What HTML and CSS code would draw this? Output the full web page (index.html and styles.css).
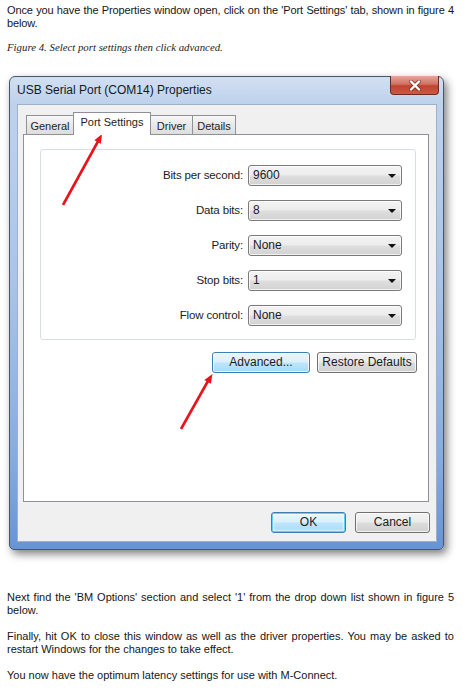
FILE: index.html
```html
<!DOCTYPE html>
<html>
<head>
<meta charset="utf-8">
<title>Port Settings</title>
<link rel="stylesheet" href="styles.css">
</head>
<body>
<div class="page">
  <p class="para intro">Once you have the Properties window open, click on the 'Port Settings' tab, shown in figure 4 below.</p>
  <p class="caption">Figure 4. Select port settings then click advanced.</p>

  <div class="window">
    <div class="titlebar">
      <span class="title">USB Serial Port (COM14) Properties</span>
      <div class="close">
        <svg width="14" height="11" viewBox="0 0 14 11"><path d="M3 1.5 L11 9.5 M11 1.5 L3 9.5" stroke="#5a1a14" stroke-width="4" stroke-linecap="round" opacity="0.55"/><path d="M3 1.5 L11 9.5 M11 1.5 L3 9.5" stroke="#ffffff" stroke-width="2.4" stroke-linecap="round"/></svg>
      </div>
    </div>
    <div class="client">
      <div class="tabs">
        <div class="tab t-general">General</div>
        <div class="tab active t-port">Port Settings</div>
        <div class="tab t-driver">Driver</div>
        <div class="tab t-details">Details</div>
      </div>
      <div class="panel">
        <div class="group">
          <div class="row"><span class="label">Bits per second:</span><div class="select"><span class="value">9600</span><span class="caret"></span></div></div>
          <div class="row"><span class="label">Data bits:</span><div class="select"><span class="value">8</span><span class="caret"></span></div></div>
          <div class="row"><span class="label">Parity:</span><div class="select"><span class="value">None</span><span class="caret"></span></div></div>
          <div class="row"><span class="label">Stop bits:</span><div class="select"><span class="value">1</span><span class="caret"></span></div></div>
          <div class="row"><span class="label">Flow control:</span><div class="select"><span class="value">None</span><span class="caret"></span></div></div>
        </div>
        <div class="btnrow">
          <div class="btn default b-adv">Advanced...</div>
          <div class="btn b-restore">Restore Defaults</div>
        </div>
      </div>
      <div class="footer">
        <div class="btn default glow b-ok">OK</div>
        <div class="btn b-cancel">Cancel</div>
      </div>
    </div>
  </div>

  <p class="para after">Next find the 'BM Options' section and select '1' from the drop down list shown in figure 5 below.</p>
  <p class="para">Finally, hit OK to close this window as well as the driver properties. You may be asked to restart Windows for the changes to take effect.</p>
  <p class="para">You now have the optimum latency settings for use with M-Connect.</p>

  <svg class="arrows" width="474" height="693" viewBox="0 0 474 693">
    <line x1="63" y1="205" x2="98.2" y2="141" stroke="#e8141c" stroke-width="2.6"/>
    <polygon points="102,134 100.9,143.8 94.4,140.2" fill="#e8141c"/>
    <line x1="181" y1="429" x2="208" y2="381" stroke="#e8141c" stroke-width="2.6"/>
    <polygon points="212.5,374 210.9,383.8 204.3,380.1" fill="#e8141c"/>
  </svg>
</div>
</body>
</html>
```
FILE: styles.css
```css
* { box-sizing: border-box; }
html, body { margin: 0; padding: 0; background: #ffffff; }

.page {
  position: relative;
  width: 474px;
  height: 693px;
  overflow: hidden;
  padding: 4px 20px 0 7px;
  font-family: "Liberation Sans", Arial, sans-serif;
  font-size: 11px;
  line-height: 13px;
  color: #161616;
}

.para {
  margin: 0 0 13px;
  text-align: justify;
}
.intro { margin-bottom: 11px; letter-spacing: -0.12px; }
.after { margin-top: 41px; }

.caption {
  margin: 0;
  font-family: "Liberation Serif", "Times New Roman", serif;
  font-style: italic;
  font-size: 10.8px;
  line-height: 13px;
  color: #222;
}

/* ---- window ---- */
.window {
  width: 435px;
  height: 474px;
  margin: 22px 0 0 2px;
  border: 1px solid #44576f;
  border-radius: 6px 6px 5px 5px;
  background: linear-gradient(180deg, #d2dff1 0px, #bed2ec 26px, #a9c3e7 45%, #88acdf 80%, #6794d5 100%);
  box-shadow: 3px 4px 9px rgba(0, 0, 0, 0.5);
  display: flex;
  flex-direction: column;
  padding: 0 6px 7px 7px;
  font-family: "Liberation Sans", Arial, sans-serif;
  color: #1b1b1b;
}

.titlebar {
  height: 27px;
  display: flex;
  align-items: center;
  flex-shrink: 0;
}
.title {
  font-size: 12px;
  color: #141a22;
  padding-bottom: 1px;
}
.close {
  margin-left: auto;
  margin-right: -2px;
  align-self: flex-start;
  margin-top: -1px;
  width: 49px;
  height: 19px;
  border: 1px solid #6b2b24;
  border-top: none;
  border-radius: 0 0 4px 4px;
  background: linear-gradient(180deg, #e3a79c 0%, #d27262 45%, #be4330 55%, #cc5a43 100%);
  display: flex;
  align-items: center;
  justify-content: center;
}
.close svg { display: block; }

.client {
  flex: 1;
  background: #f0f0f0;
  border: 1px solid #9fb0c8;
  padding: 7px 7px 0 5px;
  display: flex;
  flex-direction: column;
  font-size: 11px;
}

/* ---- tabs ---- */
.tabs {
  display: flex;
  align-items: flex-end;
  height: 22px;
  padding-left: 3px;
}
.tab {
  height: 19px;
  border: 1px solid #8e9198;
  border-bottom: none;
  border-left: none;
  background: linear-gradient(180deg, #f6f6f6 0%, #e9e9e9 50%, #dddddd 100%);
  display: flex;
  align-items: center;
  justify-content: center;
  padding-top: 2px;
  color: #1e1e1e;
}
.t-general { width: 48px; border-left: 1px solid #8e9198; }
.t-port { width: 78px; }
.t-driver { width: 42px; }
.t-details { width: 43px; }
.tab.active {
  height: 23px;
  margin-bottom: -1px;
  margin-left: -1px;
  border-left: 1px solid #8e9198;
  background: #ffffff;
  position: relative;
  z-index: 1;
  padding-top: 0;
  padding-bottom: 3px;
}

.panel {
  height: 368px;
  border: 1px solid #8e9198;
  background: #ffffff;
  padding: 14px 12px 0 16px;
  display: flex;
  flex-direction: column;
}

.group {
  height: 191px;
  border: 1px solid #d7dfe6;
  border-radius: 3px;
  padding: 15px 13px 0 0;
  display: flex;
  flex-direction: column;
  gap: 14px;
}
.row {
  display: flex;
  align-items: center;
  justify-content: flex-end;
  height: 21px;
}
.label {
  margin-right: 5px;
  color: #1b1b1b;
  font-size: 11.5px;
  letter-spacing: -0.15px;
}
.select {
  width: 154px;
  height: 21px;
  border: 1px solid #7a7a7a;
  border-radius: 3px;
  background: linear-gradient(180deg, #f4f4f4 0%, #ececec 48%, #dedede 52%, #d2d2d2 100%);
  display: flex;
  align-items: center;
  padding: 0 0 0 4px;
  font-size: 12px;
  box-shadow: inset 0 0 0 1px rgba(255,255,255,0.7);
}
.value { flex: 1; }
.caret {
  width: 0;
  height: 0;
  border-left: 4px solid transparent;
  border-right: 4px solid transparent;
  border-top: 4px solid #111;
  margin-right: 5px;
}

/* ---- buttons ---- */
.btnrow {
  display: flex;
  justify-content: flex-end;
  gap: 7px;
  margin-top: 12px;
  margin-right: -1px;
}
.footer {
  display: flex;
  justify-content: flex-end;
  gap: 9px;
  margin-top: 10px;
  margin-right: -1px;
}
.btn {
  height: 21px;
  border: 1px solid #707070;
  border-radius: 3px;
  background: linear-gradient(180deg, #f3f3f3 0%, #ebebeb 48%, #dddddd 52%, #cfcfcf 100%);
  box-shadow: inset 0 0 0 1px rgba(255,255,255,0.75);
  display: flex;
  align-items: center;
  justify-content: center;
  font-size: 12px;
  color: #1b1b1b;
}
.btn.default {
  border-color: #3c7fb1;
  background: linear-gradient(180deg, #eaf6fd 0%, #d9f0fc 48%, #bee6fd 52%, #a7d9f5 100%);
}
.btn.glow {
  box-shadow: inset 0 0 0 1px #5fd0f7, inset 0 0 2px 2px rgba(255,255,255,0.6);
}
.b-adv { width: 98px; }
.b-restore { width: 100px; }
.b-ok { width: 75px; }
.b-cancel { width: 75px; }

/* ---- annotation arrows ---- */
.arrows {
  position: absolute;
  left: 0;
  top: 0;
  pointer-events: none;
}
```
